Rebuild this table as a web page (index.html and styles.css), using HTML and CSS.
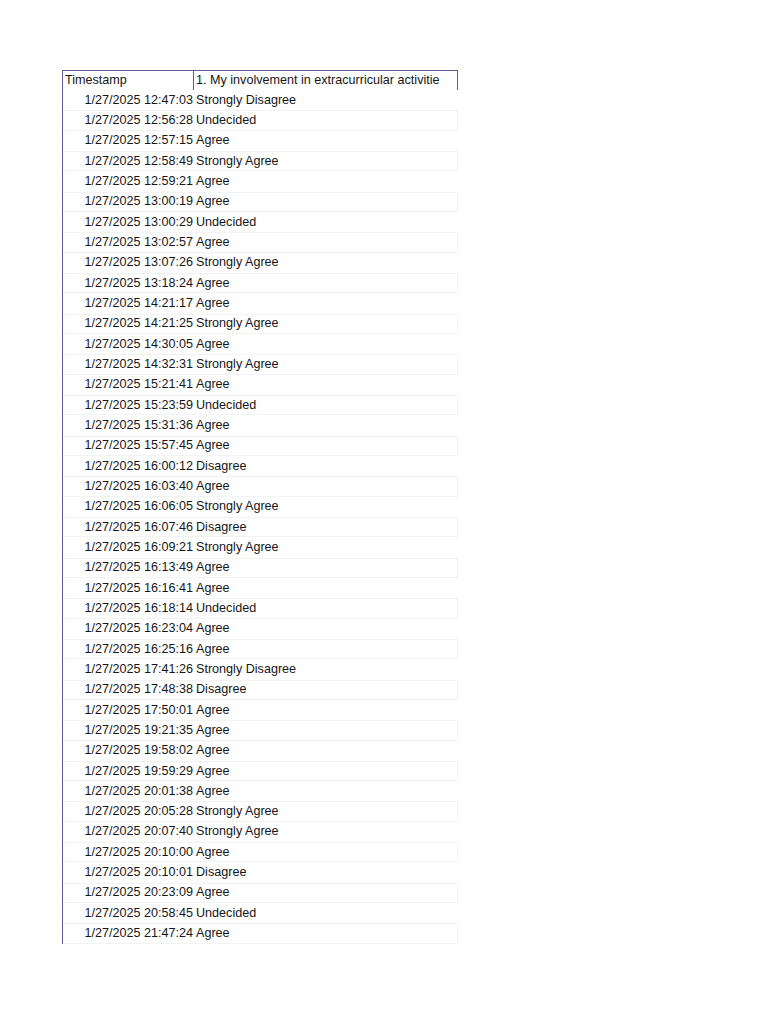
FILE: index.html
```html
<!DOCTYPE html>
<html>
<head>
<meta charset="utf-8">
<link rel="stylesheet" href="styles.css">
</head>
<body>
<div class="sheet">
  <div class="row head"><div class="c ts">Timestamp</div><div class="c q">1. My involvement in extracurricular activitie</div></div>
  <div class="row"><div class="c ts">1/27/2025 12:47:03</div><div class="c q">Strongly Disagree</div></div>
  <div class="row"><div class="c ts">1/27/2025 12:56:28</div><div class="c q">Undecided</div></div>
  <div class="row"><div class="c ts">1/27/2025 12:57:15</div><div class="c q">Agree</div></div>
  <div class="row"><div class="c ts">1/27/2025 12:58:49</div><div class="c q">Strongly Agree</div></div>
  <div class="row"><div class="c ts">1/27/2025 12:59:21</div><div class="c q">Agree</div></div>
  <div class="row"><div class="c ts">1/27/2025 13:00:19</div><div class="c q">Agree</div></div>
  <div class="row"><div class="c ts">1/27/2025 13:00:29</div><div class="c q">Undecided</div></div>
  <div class="row"><div class="c ts">1/27/2025 13:02:57</div><div class="c q">Agree</div></div>
  <div class="row"><div class="c ts">1/27/2025 13:07:26</div><div class="c q">Strongly Agree</div></div>
  <div class="row"><div class="c ts">1/27/2025 13:18:24</div><div class="c q">Agree</div></div>
  <div class="row"><div class="c ts">1/27/2025 14:21:17</div><div class="c q">Agree</div></div>
  <div class="row"><div class="c ts">1/27/2025 14:21:25</div><div class="c q">Strongly Agree</div></div>
  <div class="row"><div class="c ts">1/27/2025 14:30:05</div><div class="c q">Agree</div></div>
  <div class="row"><div class="c ts">1/27/2025 14:32:31</div><div class="c q">Strongly Agree</div></div>
  <div class="row"><div class="c ts">1/27/2025 15:21:41</div><div class="c q">Agree</div></div>
  <div class="row"><div class="c ts">1/27/2025 15:23:59</div><div class="c q">Undecided</div></div>
  <div class="row"><div class="c ts">1/27/2025 15:31:36</div><div class="c q">Agree</div></div>
  <div class="row"><div class="c ts">1/27/2025 15:57:45</div><div class="c q">Agree</div></div>
  <div class="row"><div class="c ts">1/27/2025 16:00:12</div><div class="c q">Disagree</div></div>
  <div class="row"><div class="c ts">1/27/2025 16:03:40</div><div class="c q">Agree</div></div>
  <div class="row"><div class="c ts">1/27/2025 16:06:05</div><div class="c q">Strongly Agree</div></div>
  <div class="row"><div class="c ts">1/27/2025 16:07:46</div><div class="c q">Disagree</div></div>
  <div class="row"><div class="c ts">1/27/2025 16:09:21</div><div class="c q">Strongly Agree</div></div>
  <div class="row"><div class="c ts">1/27/2025 16:13:49</div><div class="c q">Agree</div></div>
  <div class="row"><div class="c ts">1/27/2025 16:16:41</div><div class="c q">Agree</div></div>
  <div class="row"><div class="c ts">1/27/2025 16:18:14</div><div class="c q">Undecided</div></div>
  <div class="row"><div class="c ts">1/27/2025 16:23:04</div><div class="c q">Agree</div></div>
  <div class="row"><div class="c ts">1/27/2025 16:25:16</div><div class="c q">Agree</div></div>
  <div class="row"><div class="c ts">1/27/2025 17:41:26</div><div class="c q">Strongly Disagree</div></div>
  <div class="row"><div class="c ts">1/27/2025 17:48:38</div><div class="c q">Disagree</div></div>
  <div class="row"><div class="c ts">1/27/2025 17:50:01</div><div class="c q">Agree</div></div>
  <div class="row"><div class="c ts">1/27/2025 19:21:35</div><div class="c q">Agree</div></div>
  <div class="row"><div class="c ts">1/27/2025 19:58:02</div><div class="c q">Agree</div></div>
  <div class="row"><div class="c ts">1/27/2025 19:59:29</div><div class="c q">Agree</div></div>
  <div class="row"><div class="c ts">1/27/2025 20:01:38</div><div class="c q">Agree</div></div>
  <div class="row"><div class="c ts">1/27/2025 20:05:28</div><div class="c q">Strongly Agree</div></div>
  <div class="row"><div class="c ts">1/27/2025 20:07:40</div><div class="c q">Strongly Agree</div></div>
  <div class="row"><div class="c ts">1/27/2025 20:10:00</div><div class="c q">Agree</div></div>
  <div class="row"><div class="c ts">1/27/2025 20:10:01</div><div class="c q">Disagree</div></div>
  <div class="row"><div class="c ts">1/27/2025 20:23:09</div><div class="c q">Agree</div></div>
  <div class="row"><div class="c ts">1/27/2025 20:58:45</div><div class="c q">Undecided</div></div>
  <div class="row"><div class="c ts">1/27/2025 21:47:24</div><div class="c q">Agree</div></div>
</div>
</body>
</html>
```

FILE: styles.css
```css
html, body {
  margin: 0;
  padding: 0;
  background: #ffffff;
}

body {
  font-family: "Liberation Sans", Arial, sans-serif;
  font-size: 12.6px;
  color: #161616;
}

.sheet {
  margin: 70px 0 0 62px;
  width: 396px;
  box-sizing: border-box;
  border-left: 1px solid #6a5c9c;
}

.row {
  display: grid;
  grid-template-columns: 131px 263px;
  height: 20.34px;
  box-sizing: border-box;
  align-items: center;
}

.row:nth-child(2n+3) {
  border-top: 1px solid #f3f3f3;
  border-bottom: 1px solid #f3f3f3;
  border-right: 1px solid #f3f3f3;
}

.head {
  height: 20px;
  border-top: 1px solid #6a5c9c;
  border-right: 1px solid #6a5c9c;
}

.c {
  white-space: nowrap;
  overflow: hidden;
  line-height: 19px;
}

.ts {
  text-align: right;
  padding-right: 1px;
}

.q {
  padding-left: 2px;
}

.head .ts {
  text-align: left;
  padding-left: 2px;
  border-right: 1px solid #6a5c9c;
  height: 100%;
  box-sizing: border-box;
}
```
